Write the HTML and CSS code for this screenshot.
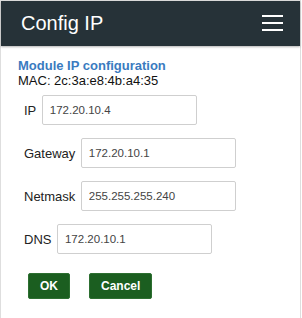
FILE: index.html
```html
<!DOCTYPE html>
<html>
<head>
  <meta charset="utf-8">
  <link rel="stylesheet" href="styles.css">
</head>
<body>
  <div class="page">
    <div class="header">
      <span class="title">Config IP</span>
      <button class="menu-btn" aria-label="Menu">
        <span></span><span></span><span></span>
      </button>
    </div>

    <div class="content">
      <div class="section-title">Module IP configuration</div>
      <div class="mac">MAC: 2c:3a:e8:4b:a4:35</div>

      <form class="ip-form">
        <div class="row">
          <label for="ip">IP</label>
          <input id="ip" type="text" value="172.20.10.4">
        </div>
        <div class="row">
          <label for="gateway">Gateway</label>
          <input id="gateway" type="text" value="172.20.10.1">
        </div>
        <div class="row">
          <label for="netmask">Netmask</label>
          <input id="netmask" type="text" value="255.255.255.240">
        </div>
        <div class="row">
          <label for="dns">DNS</label>
          <input id="dns" type="text" value="172.20.10.1">
        </div>

        <div class="actions">
          <button type="button" class="btn">OK</button>
          <button type="button" class="btn">Cancel</button>
        </div>
      </form>
    </div>
  </div>
</body>
</html>
```

FILE: styles.css
```css
* {
  margin: 0;
  padding: 0;
  box-sizing: border-box;
}

body {
  background: #fff;
  font-family: 'Liberation Sans', Arial, sans-serif;
  color: #111;
}

.page {
  width: 301px;
  height: 318px;
  border: 1px solid #dedede;
  border-bottom: none;
}

.header {
  height: 45px;
  background: #263238;
  display: flex;
  align-items: center;
  justify-content: space-between;
  padding: 0 17px 0 20px;
  box-shadow: 0 1px 2px rgba(0, 0, 0, 0.3);
}

.title {
  color: #fff;
  font-size: 20px;
  line-height: 24px;
  margin-top: -1px;
}

.menu-btn {
  background: none;
  border: none;
  width: 21px;
  display: flex;
  flex-direction: column;
  gap: 5px;
  cursor: pointer;
  margin-top: -2px;
}

.menu-btn span {
  display: block;
  height: 2px;
  background: #fff;
}

.content {
  padding: 12px 0 0 17px;
}

.section-title {
  color: #3a7bbf;
  font-size: 13px;
  font-weight: bold;
  line-height: 15px;
}

.mac {
  font-size: 13px;
  line-height: 15px;
}

.ip-form {
  margin-top: 7px;
}

.row {
  display: flex;
  align-items: center;
  gap: 5.5px;
  padding-left: 6px;
  margin-bottom: 13px;
}

.row label {
  font-size: 13px;
  color: #222;
}

.row input {
  width: 155px;
  height: 30px;
  border: 1px solid #cfcfcf;
  border-radius: 2px;
  padding: 0 7px;
  font-family: inherit;
  font-size: 11.5px;
  color: #444;
  outline: none;
}

.actions {
  display: flex;
  gap: 19px;
  padding: 6px 0 0 10px;
}

.btn {
  height: 26px;
  padding: 0 11px;
  background: #1b5e20;
  border: 1px solid #2d6f31;
  border-radius: 2px;
  color: #fff;
  font-family: inherit;
  font-size: 12px;
  font-weight: bold;
  cursor: pointer;
}
```
